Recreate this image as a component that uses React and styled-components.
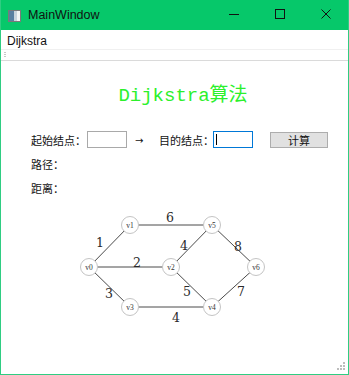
import React from "react";
import styled, { createGlobalStyle } from "styled-components";

const GlobalStyle = createGlobalStyle`
  html, body {
    margin: 0;
    padding: 0;
    background: #ffffff;
  }
  body {
    font-family: "Liberation Sans", Arial, sans-serif;
  }
`;

const nodes = {
  v0: [29, 67],
  v1: [70, 25],
  v5: [152, 25],
  v2: [111, 67],
  v6: [196, 67],
  v3: [70, 107],
  v4: [152, 107],
};

const edges = [
  ["v0", "v1"],
  ["v1", "v5"],
  ["v0", "v2"],
  ["v0", "v3"],
  ["v5", "v2"],
  ["v5", "v6"],
  ["v2", "v4"],
  ["v6", "v4"],
  ["v3", "v4"],
];

const weights = [
  { w: 1, x: 40, y: 43 },
  { w: 6, x: 110, y: 18 },
  { w: 2, x: 77, y: 63 },
  { w: 3, x: 49, y: 94 },
  { w: 4, x: 124, y: 46 },
  { w: 8, x: 178, y: 47 },
  { w: 5, x: 127, y: 92 },
  { w: 7, x: 181, y: 92 },
  { w: 4, x: 116, y: 118 },
];

function App() {
  return (
    <>
      <GlobalStyle />
      <Window>
        <TitleBar>
          <AppIcon width="13" height="12" viewBox="0 0 13 12">
            <rect x="0.5" y="0.5" width="12" height="11" fill="#f4f4f4" stroke="#7a7a7a" />
            <rect x="1" y="1" width="5" height="10" fill="#5a7fa0" />
            <rect x="6" y="1" width="3" height="10" fill="#c9d3dc" />
          </AppIcon>
          <WindowTitle>MainWindow</WindowTitle>
          <Controls>
            <ControlButton>
              <svg width="12" height="12" viewBox="0 0 12 12">
                <line x1="1" y1="6.5" x2="11" y2="6.5" stroke="#111" strokeWidth="1" />
              </svg>
            </ControlButton>
            <ControlButton>
              <svg width="12" height="12" viewBox="0 0 12 12">
                <rect x="1.5" y="1.5" width="9" height="9" fill="none" stroke="#111" strokeWidth="1" />
              </svg>
            </ControlButton>
            <ControlButton>
              <svg width="12" height="12" viewBox="0 0 12 12">
                <path d="M1.5 1.5 L10.5 10.5 M10.5 1.5 L1.5 10.5" stroke="#111" strokeWidth="1" />
              </svg>
            </ControlButton>
          </Controls>
        </TitleBar>

        <MenuBar>
          <MenuItem>Dijkstra</MenuItem>
        </MenuBar>
        <ToolBar>
          <Handle />
        </ToolBar>

        <Central>
          <Heading>Dijkstra算法</Heading>
          <FormRow>
            <Label $width={56}>起始结点：</Label>
            <TextBox />
            <Arrow>→</Arrow>
            <Label $width={54}>目的结点：</Label>
            <TextBox $focused>
              <Caret />
            </TextBox>
            <PushButton>计算</PushButton>
          </FormRow>
          <FormRow>
            <Label>路径：</Label>
          </FormRow>
          <FormRow>
            <Label>距离：</Label>
          </FormRow>

          <Graph width="220" height="130" viewBox="0 0 220 130">
            {edges.map(([a, b], i) => (
              <line
                key={i}
                x1={nodes[a][0]}
                y1={nodes[a][1]}
                x2={nodes[b][0]}
                y2={nodes[b][1]}
                stroke="#4a4a4a"
                strokeWidth="1"
              />
            ))}
            {weights.map((e, i) => (
              <text
                key={i}
                x={e.x}
                y={e.y + 4}
                textAnchor="middle"
                fontSize="12.5"
                fontFamily="'DejaVu Serif', serif"
                fill="#2a2a2a"
              >
                {e.w}
              </text>
            ))}
            {Object.entries(nodes).map(([name, [x, y]]) => (
              <g key={name}>
                <circle cx={x} cy={y} r="8.5" fill="#ffffff" stroke="#c4c4c4" strokeWidth="1" />
                <text
                  x={x}
                  y={y + 2.5}
                  textAnchor="middle"
                  fontSize="7.5"
                  fontFamily="'Liberation Serif', serif"
                  fill="#333"
                >
                  {name}
                </text>
              </g>
            ))}
          </Graph>
        </Central>

        <SizeGrip width="8" height="8" viewBox="0 0 8 8">
          <rect x="6" y="0" width="2" height="2" fill="#bdbdbd" />
          <rect x="3" y="3" width="2" height="2" fill="#bdbdbd" />
          <rect x="6" y="3" width="2" height="2" fill="#bdbdbd" />
          <rect x="0" y="6" width="2" height="2" fill="#bdbdbd" />
          <rect x="3" y="6" width="2" height="2" fill="#bdbdbd" />
          <rect x="6" y="6" width="2" height="2" fill="#bdbdbd" />
        </SizeGrip>
      </Window>
    </>
  );
}

const Window = styled.div`
  position: relative;
  width: 349px;
  height: 375px;
  box-sizing: border-box;
  border: 1px solid #2fcd82;
  border-top: none;
  display: flex;
  flex-direction: column;
  background: #ffffff;
  overflow: hidden;
`;

const TitleBar = styled.div`
  height: 30px;
  margin: 0 -1px;
  background: #06c86a;
  display: flex;
  align-items: center;
  flex-shrink: 0;
`;

const AppIcon = styled.svg`
  margin-left: 8px;
  margin-top: 1px;
`;

const WindowTitle = styled.span`
  margin-left: 7px;
  font-family: "Liberation Sans", Arial, sans-serif;
  font-size: 12.5px;
  color: #111;
`;

const Controls = styled.div`
  margin-left: auto;
  display: flex;
  height: 100%;
`;

const ControlButton = styled.div`
  width: 46px;
  height: 100%;
  display: flex;
  align-items: center;
  justify-content: center;
  margin-top: -1px;
`;

const MenuBar = styled.div`
  height: 19px;
  display: flex;
  align-items: center;
  flex-shrink: 0;
`;

const MenuItem = styled.span`
  padding-left: 6px;
  font-family: "Liberation Sans", Arial, sans-serif;
  font-size: 12px;
  color: #111;
  margin-top: 2px;
`;

const ToolBar = styled.div`
  height: 10px;
  border-top: 1px solid #f0f0f0;
  border-bottom: 1px solid #dadada;
  display: flex;
  align-items: center;
  flex-shrink: 0;
`;

const Handle = styled.div`
  width: 2px;
  height: 6px;
  margin-left: 3px;
  background: repeating-linear-gradient(
    to bottom,
    #c8c8c8 0,
    #c8c8c8 1px,
    transparent 1px,
    transparent 2px
  );
`;

const Central = styled.div`
  flex: 1;
  display: flex;
  flex-direction: column;
`;

const Heading = styled.div`
  margin-top: 23px;
  height: 24px;
  line-height: 24px;
  text-align: center;
  padding-left: 17px;
  font-family: "Liberation Mono", "Noto Sans CJK SC", monospace;
  font-size: 19px;
  color: #2cf02c;
  margin-bottom: 20px;
`;

const FormRow = styled.div`
  height: 24px;
  display: flex;
  align-items: center;
  padding-left: 30px;
`;

const Label = styled.span`
  width: ${(p) => (p.$width ? `${p.$width}px` : "auto")};
  font-family: "Noto Sans CJK SC", sans-serif;
  font-size: 11px;
  color: #111;
  white-space: nowrap;
`;

const TextBox = styled.div`
  width: 40px;
  height: 17px;
  box-sizing: border-box;
  border: 1px solid ${(p) => (p.$focused ? "#0078d7" : "#a9a9a9")};
  background: #fff;
  position: relative;
  margin-top: -1px;
`;

const Caret = styled.div`
  position: absolute;
  left: 2px;
  top: 2px;
  width: 1px;
  height: 11px;
  background: #000;
`;

const Arrow = styled.span`
  width: 32px;
  padding-left: 8px;
  box-sizing: border-box;
  font-family: "DejaVu Sans", sans-serif;
  font-size: 10px;
  color: #111;
`;

const PushButton = styled.div`
  margin-left: 17px;
  width: 58px;
  height: 16px;
  box-sizing: border-box;
  border: 1px solid #adadad;
  background: #e1e1e1;
  display: flex;
  align-items: center;
  justify-content: center;
  font-family: "Noto Sans CJK SC", sans-serif;
  font-size: 11px;
  color: #111;
`;

const Graph = styled.svg`
  display: block;
  margin-left: 59px;
`;

const SizeGrip = styled.svg`
  position: absolute;
  right: 3px;
  bottom: 4px;
`;

export default App;
